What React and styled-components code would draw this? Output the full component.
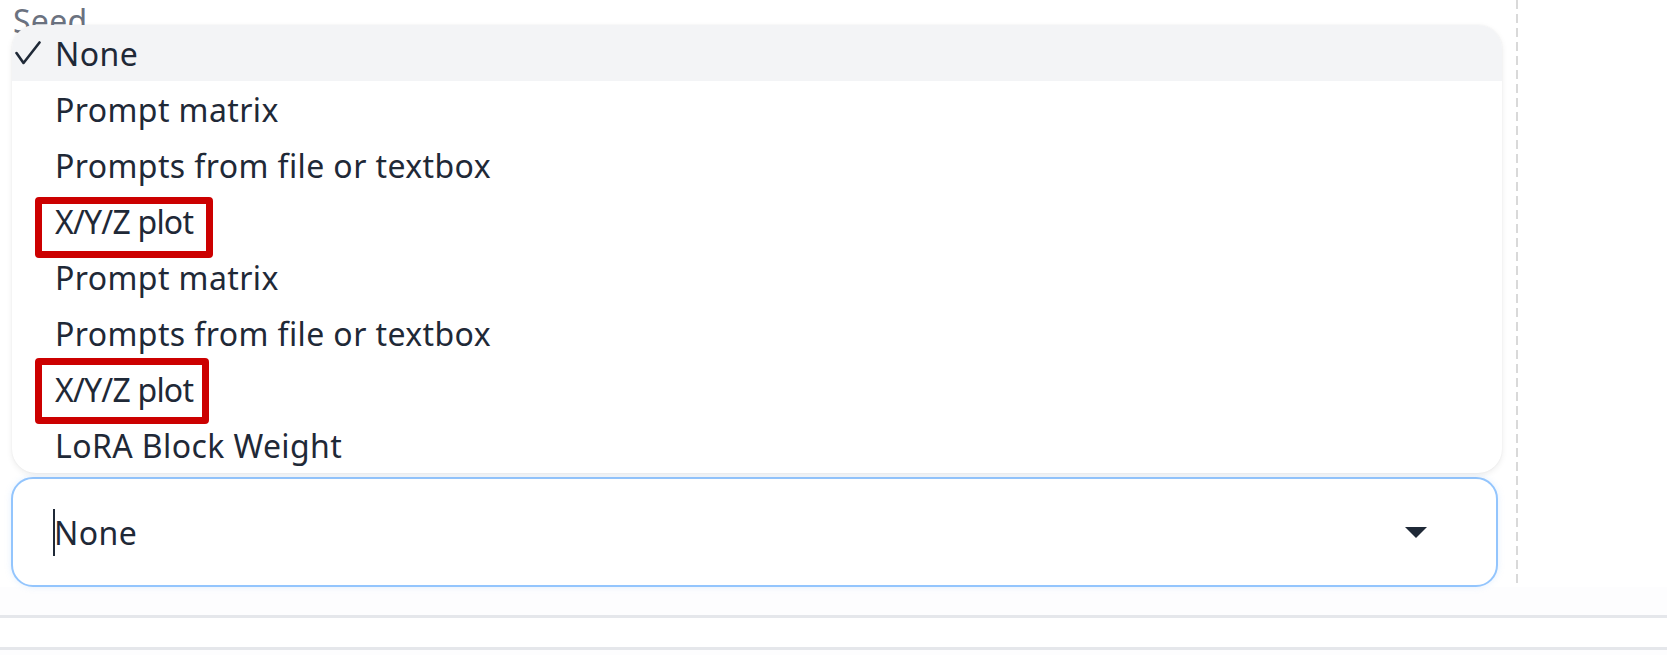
import React from "react";
import styled, { createGlobalStyle } from "styled-components";

const GlobalStyle = createGlobalStyle`
  html, body {
    margin: 0;
    padding: 0;
    background: #ffffff;
    font-family: "Noto Sans", "Open Sans", sans-serif;
  }
`;

const options = [
  { label: "None", selected: true },
  { label: "Prompt matrix" },
  { label: "Prompts from file or textbox" },
  { label: "X/Y/Z plot", mark: "a" },
  { label: "Prompt matrix" },
  { label: "Prompts from file or textbox" },
  { label: "X/Y/Z plot", mark: "b" },
  { label: "LoRA Block Weight" },
];

const Page = styled.div`
  position: relative;
  width: 1667px;
  height: 655px;
  overflow: hidden;
  background: #fdfdfe;
`;

const Panel = styled.div`
  display: flex;
  height: 587px;
  background: #ffffff;
`;

const Column = styled.div`
  width: 1518px;
  box-sizing: border-box;
  padding: 0 20px 0 11px;
  display: flex;
  flex-direction: column;
  justify-content: space-between;
  background-image: linear-gradient(#d9d9d9 65%, transparent 65%);
  background-size: 2px 14px;
  background-repeat: repeat-y;
  background-position: right top;
`;

const Label = styled.span`
  display: block;
  padding: 0 0 0 2px;
  font-size: 32px;
  line-height: 42px;
  letter-spacing: 0.3px;
  color: #6b7280;
`;

const InputBox = styled.div`
  display: flex;
  align-items: center;
  height: 110px;
  box-sizing: border-box;
  border: 2px solid #93c5fd;
  border-radius: 22px;
  padding: 0 69px 0 40px;
  background: #ffffff;
  box-shadow: 0 0 6px rgba(147, 197, 253, 0.25);
`;

const Value = styled.span`
  flex: 1;
  font-size: 32px;
  letter-spacing: 0.4px;
  color: #1f2937;
  display: flex;
  align-items: center;
`;

const Caret = styled.span`
  display: inline-block;
  width: 2px;
  height: 47px;
  background: #1f2937;
  margin-right: -1px;
`;

const Arrow = styled.span`
  width: 0;
  height: 0;
  border-left: 11px solid transparent;
  border-right: 11px solid transparent;
  border-top: 11px solid #1f2937;
`;

const Divider = styled.div`
  margin-top: 28px;
  height: 29px;
  border-top: 3px solid #e5e7eb;
  border-bottom: 3px solid #e5e7eb;
  background: #ffffff;
`;

const Menu = styled.ul`
  position: absolute;
  left: 12px;
  top: 25px;
  width: 1490px;
  margin: 0;
  padding: 0;
  list-style: none;
  background: #ffffff;
  border-radius: 24px;
  box-shadow: 0 2px 6px rgba(0, 0, 0, 0.08), 0 0 2px rgba(0, 0, 0, 0.06);
`;

const Item = styled.li`
  position: relative;
  display: flex;
  align-items: center;
  height: 56px;
  font-size: 32px;
  letter-spacing: ${(p) => (p.$tight ? "-0.8px" : "0.4px")};
  color: #1f2937;
  background: ${(p) => (p.$active ? "#f3f4f6" : "transparent")};
  border-radius: ${(p) => (p.$active ? "24px 24px 0 0" : "0")};
  &:last-child {
    border-radius: 0 0 24px 24px;
  }
`;

const Check = styled.span`
  width: 43px;
  display: flex;
  align-items: center;
  padding-left: 3px;
  box-sizing: border-box;
`;

const Mark = styled.span`
  position: absolute;
  left: 23px;
  top: ${(p) => (p.$v === "a" ? "4px" : "-3px")};
  width: ${(p) => (p.$v === "a" ? "178px" : "174px")};
  height: ${(p) => (p.$v === "a" ? "61px" : "66px")};
  box-sizing: border-box;
  border: 7px solid #cc0000;
  border-radius: 4px;
`;

const CheckIcon = () => (
  <svg width="26" height="24" viewBox="0 0 26 24">
    <path
      d="M1.5 12 L8.5 22 L24.5 1.5"
      fill="none"
      stroke="#1f2937"
      strokeWidth="2.6"
      strokeLinecap="round"
      strokeLinejoin="round"
    />
  </svg>
);

export default function App() {
  return (
    <>
      <GlobalStyle />
      <Page>
        <Panel>
          <Column>
            <Label>Seed</Label>
            <InputBox>
              <Value>
                <Caret />
                None
              </Value>
              <Arrow />
            </InputBox>
          </Column>
        </Panel>
        <Divider />
        <Menu>
          {options.map((o, i) => (
            <Item key={i} $active={o.selected} $tight={!!o.mark}>
              <Check>{o.selected && <CheckIcon />}</Check>
              {o.label}
              {o.mark && <Mark $v={o.mark} />}
            </Item>
          ))}
        </Menu>
      </Page>
    </>
  );
}
